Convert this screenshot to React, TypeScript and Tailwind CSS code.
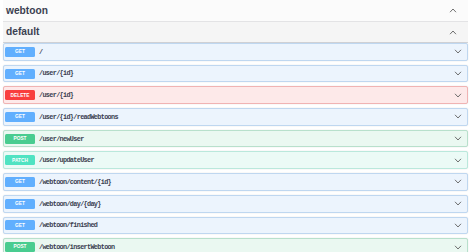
import React from "react";

type Op = { m: string; p: string };
const ops: Op[] = [
  { m: "GET", p: "/" },
  { m: "GET", p: "/user/{id}" },
  { m: "DELETE", p: "/user/{id}" },
  { m: "GET", p: "/user/{id}/readWebtoons" },
  { m: "POST", p: "/user/newUser" },
  { m: "PATCH", p: "/user/updateUser" },
  { m: "GET", p: "/webtoon/content/{id}" },
  { m: "GET", p: "/webtoon/day/{day}" },
  { m: "GET", p: "/webtoon/finished" },
  { m: "POST", p: "/webtoon/insertWebtoon" },
];

const styles: Record<string, { row: string; badge: string }> = {
  GET: { row: "bg-[#ecf4fd] border-[#bfd7f0]", badge: "bg-[#61affe]" },
  DELETE: { row: "bg-[#fde9e9] border-[#f0b3b3]", badge: "bg-[#f93e3e]" },
  POST: { row: "bg-[#eaf8f1] border-[#b8e0cc]", badge: "bg-[#49cc90]" },
  PATCH: { row: "bg-[#ebfaf6] border-[#bae8dc]", badge: "bg-[#50e3c2]" },
};

const Chevron = ({ up }: { up?: boolean }) => (
  <svg width="8" height="5" viewBox="0 0 8 5" className="block">
    <path
      d={up ? "M1 4.2 L4 1 L7 4.2" : "M1 0.8 L4 4 L7 0.8"}
      fill="none"
      stroke="#606060"
      strokeWidth="0.9"
    />
  </svg>
);

export default function App() {
  return (
    <div className="w-[474px] h-[252px] overflow-hidden bg-white" style={{ fontFamily: "'Liberation Sans', Arial, sans-serif" }}>
      <div className="ml-[3px] w-[465px]">
        <div className="h-[22px] flex items-center justify-between border-b border-[#e3e3e5] bg-[#fbfbfb] pl-[3px] pr-[11px]">
          <span className="text-[10.2px] font-bold text-[#3b4151]">webtoon</span>
          <Chevron up />
        </div>
        <div className="h-[21px] flex items-center justify-between border-b border-[#d4d6da] bg-[#f5f5f5] pl-[3px] pr-[11px]">
          <span className="text-[10.2px] font-bold text-[#3b4151]">default</span>
          <Chevron up />
        </div>
        <div className="flex flex-col gap-[4px]">
          {ops.map((o, i) => (
            <div
              key={i}
              className={`h-[17.7px] flex items-center border rounded-[2px] pl-[1px] pr-[5px] shadow-[0_0_1.5px_rgba(0,0,0,0.12)] ${styles[o.m].row}`}
            >
              <span
                className={`w-[30px] h-[10px] rounded-[1.5px] flex items-center justify-center text-white font-bold text-[4.8px] ${styles[o.m].badge}`}
              >
                {o.m}
              </span>
              <span
                className="ml-[4px] flex-1 text-[#3b4151] font-bold text-[6.8px] tracking-[-0.65px]"
                style={{ fontFamily: "'Liberation Mono', 'DejaVu Sans Mono', monospace" }}
              >
                {o.p}
              </span>
              <Chevron />
            </div>
          ))}
        </div>
      </div>
    </div>
  );
}
